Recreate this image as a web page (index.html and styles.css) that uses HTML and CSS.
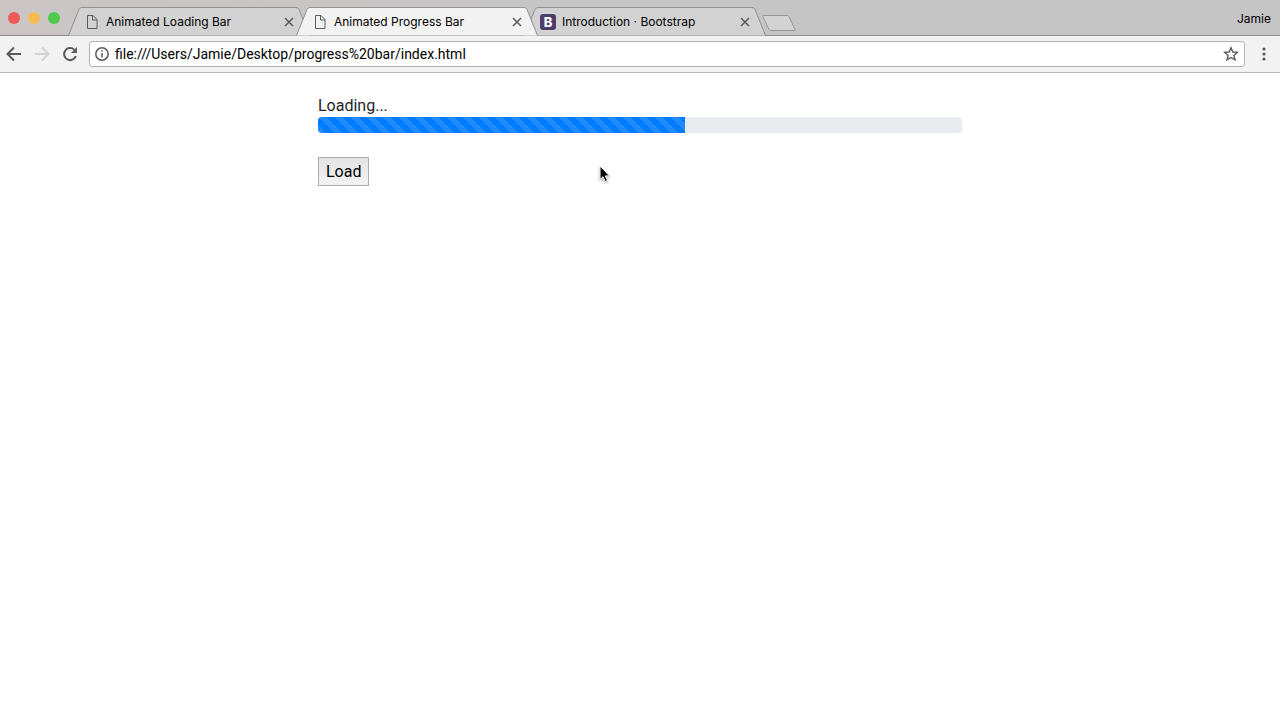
FILE: index.html
```html
<!DOCTYPE html>
<html lang="en">
<head>
  <meta charset="UTF-8" />
  <meta name="viewport" content="width=device-width, initial-scale=1.0"/>
  <title>Animated Progress Bar</title>
  <link rel="stylesheet" href="styles.css">
</head>
<body>
  <!-- Tab strip -->
  <header class="tab-strip">
    <div class="window-buttons">
      <button class="dot red" aria-label="Close window"></button>
      <button class="dot yellow" aria-label="Minimise window"></button>
      <button class="dot green" aria-label="Zoom window"></button>
    </div>

    <div class="tabs">
      <div class="tab">
        <svg class="tab-shape" viewBox="0 0 242 30" preserveAspectRatio="none"><path d="M0.5 29.5 L11 2.5 Q12 0.5 14 0.5 H228 Q230 0.5 231 2.5 L241.5 29.5"/></svg>
        <svg class="tab-icon" viewBox="0 0 16 16"><path d="M3.5 1.5H9L13 5.5V14.5H3.5Z M8.5 1.5V6H13"/></svg>
        <span class="tab-title">Animated Loading Bar</span>
        <button class="tab-close" aria-label="Close tab"><svg viewBox="0 0 10 10"><path d="M1 1L9 9M9 1L1 9"/></svg></button>
      </div>
      <div class="tab active">
        <svg class="tab-shape" viewBox="0 0 242 30" preserveAspectRatio="none"><path d="M0.5 29.5 L11 2.5 Q12 0.5 14 0.5 H228 Q230 0.5 231 2.5 L241.5 29.5"/></svg>
        <svg class="tab-icon" viewBox="0 0 16 16"><path d="M3.5 1.5H9L13 5.5V14.5H3.5Z M8.5 1.5V6H13"/></svg>
        <span class="tab-title">Animated Progress Bar</span>
        <button class="tab-close" aria-label="Close tab"><svg viewBox="0 0 10 10"><path d="M1 1L9 9M9 1L1 9"/></svg></button>
      </div>
      <div class="tab">
        <svg class="tab-shape" viewBox="0 0 242 30" preserveAspectRatio="none"><path d="M0.5 29.5 L11 2.5 Q12 0.5 14 0.5 H228 Q230 0.5 231 2.5 L241.5 29.5"/></svg>
        <span class="tab-icon bootstrap">B</span>
        <span class="tab-title">Introduction · Bootstrap</span>
        <button class="tab-close" aria-label="Close tab"><svg viewBox="0 0 10 10"><path d="M1 1L9 9M9 1L1 9"/></svg></button>
      </div>
      <button class="new-tab" aria-label="New tab">
        <svg viewBox="0 0 34 16"><path d="M1.500 0.500H25.500Q26.500 0.500 27 1.500L33 14.500Q33.500 15.500 32.500 15.500H9Q7.500 15.500 7 14.500L0.800 1.500Q0.500 0.500 1.500 0.500Z"/></svg>
      </button>
    </div>

    <button class="profile">Jamie</button>
  </header>

  <!-- Toolbar -->
  <div class="toolbar">
    <button class="tool" aria-label="Back"><svg viewBox="0 0 16 16"><path d="M15 8H2M8 1.500L1.500 8L8 14.500"/></svg></button>
    <button class="tool disabled" aria-label="Forward" disabled><svg viewBox="0 0 16 16"><path d="M1 8H14M8 1.500L14.500 8L8 14.500"/></svg></button>
    <button class="tool" aria-label="Reload"><svg viewBox="0 0 16 16"><path d="M13.800 10A6 6 0 1 1 12.300 3.800"/><path class="solid" d="M15 1V7H9Z"/></svg></button>
    <div class="address">
      <svg class="info" viewBox="0 0 14 14"><circle cx="7" cy="7" r="6.200"/><path d="M7 6V10.500M7 3.300V4.800"/></svg>
      <input class="url" type="text" aria-label="Address" value="file:///Users/Jamie/Desktop/progress%20bar/index.html" spellcheck="false">
      <button class="star" aria-label="Bookmark"><svg viewBox="0 0 16 16"><path d="M8 1.800L9.800 6L14.300 6.400L10.900 9.400L12 13.900L8 11.500L4 13.900L5.100 9.400L1.700 6.400L6.200 6Z"/></svg></button>
    </div>
    <button class="menu" aria-label="Menu"><svg viewBox="0 0 4 14"><circle cx="2" cy="2" r="1.600"/><circle cx="2" cy="7" r="1.600"/><circle cx="2" cy="12" r="1.600"/></svg></button>
  </div>

  <!-- Page -->
  <main class="container">
    <div class="status" id="status">Loading...</div>
    <div class="progress" role="progressbar" aria-labelledby="status" aria-valuenow="57" aria-valuemin="0" aria-valuemax="100">
      <div class="progress-bar" style="width: 57%"></div>
    </div>
    <button class="load">Load</button>
  </main>

  <svg class="cursor" viewBox="0 0 12 18"><path d="M1 1V14.500L4 11.700L6.200 16.500L8.500 15.500L6.300 10.900H10.500Z"/></svg>
</body>
</html>
```
FILE: styles.css
```css
* {
  box-sizing: border-box;
}

body {
  margin: 0;
  background-color: #fff;
  color: #212529;
  font-family: Roboto, sans-serif;
  font-size: 16px;
}

button {
  padding: 0;
  border: none;
  background: none;
  color: inherit;
  font-family: inherit;
}

svg {
  display: block;
  fill: none;
  stroke: #5a5a5a;
}

/* Tab strip */
.tab-strip {
  display: flex;
  align-items: flex-end;
  height: 36px;
  background: linear-gradient(90deg, #cbc6c5, #c5c5c5 50%);
  border-bottom: 1px solid #8f8d8d;
  font-family: Inter, sans-serif;
}

.window-buttons {
  display: flex;
  align-self: center;
  gap: 8px;
  padding-left: 8px;
  width: 68px;
}

.dot {
  width: 12px;
  height: 12px;
  border-radius: 50%;
}

.red {
  background-color: #ee5a56;
}

.yellow {
  background-color: #f5bd4f;
}

.green {
  background-color: #4fca4b;
}

.tabs {
  display: flex;
  flex: 1;
  align-items: center;
  margin-bottom: -1px;
}

.tab {
  position: relative;
  display: flex;
  align-items: center;
  width: 242px;
  height: 29px;
  margin-right: -14px;
  padding: 0 16px;
  color: #000;
  font-size: 12px;
}

.tab-shape {
  position: absolute;
  top: 0;
  left: 0;
  width: 100%;
  height: 100%;
  fill: #d3d2d2;
  stroke: #8f8d8d;
}

.active {
  z-index: 1;
}

.active .tab-shape {
  fill: #f3f2f2;
}

.tab-icon,
.tab-title,
.tab-close {
  position: relative;
}

.tab-icon {
  width: 16px;
  height: 16px;
  margin-right: 6px;
}

.bootstrap {
  border-radius: 3px;
  background-color: #4c3d6b;
  color: #fff;
  font-size: 13px;
  font-weight: 800;
  line-height: 16px;
  text-align: center;
}

.tab-title {
  flex: 1;
  white-space: nowrap;
}

.tab-close svg {
  width: 10px;
  height: 10px;
  stroke-width: 1.5;
}

.new-tab {
  margin-left: 10px;
  padding-top: 2px;
}

.new-tab svg {
  width: 34px;
  height: 16px;
  fill: #d3d3d3;
  stroke: #979797;
}

.profile {
  align-self: center;
  padding: 2px 9px 0 0;
  color: #000;
  font-size: 12px;
}

/* Toolbar */
.toolbar {
  display: flex;
  align-items: center;
  height: 37px;
  padding: 0 14px 0 6px;
  background-color: #f3f2f2;
  border-bottom: 1px solid #b8b8b8;
}

.tool {
  margin-right: 12px;
}

.tool svg {
  width: 16px;
  height: 16px;
  stroke-width: 2;
}

.disabled svg {
  stroke: #d2d2d2;
}

.solid {
  fill: #5a5a5a;
  stroke: none;
}

.address {
  display: flex;
  flex: 1;
  align-items: center;
  height: 26px;
  margin-right: 17px;
  padding: 0 5px;
  background-color: #fff;
  border: 1px solid #b3b3b3;
  border-radius: 3px;
}

.tool + .address {
  margin-left: -1px;
}

.info {
  width: 14px;
  height: 14px;
  stroke-width: 1.5;
}

.url {
  flex: 1;
  min-width: 0;
  margin-left: 6px;
  padding: 0;
  border: none;
  outline: none;
  background: none;
  color: #000;
  font-family: inherit;
  font-size: 14px;
}

.star svg {
  width: 16px;
  height: 16px;
  stroke-width: 1.4;
}

.menu svg {
  width: 4px;
  height: 14px;
  fill: #5a5a5a;
  stroke: none;
}

/* Page */
.container {
  max-width: 644px;
  margin: 0 auto;
  padding-top: 22px;
}

.status {
  line-height: 22px;
}

.progress {
  height: 16px;
  overflow: hidden;
  background-color: #e9ecef;
  border-radius: 4px;
}

.progress-bar {
  height: 100%;
  background-color: #007bff;
  background-image: linear-gradient(45deg, rgba(255,255,255,0.12) 25%, transparent 25%, transparent 50%, rgba(255,255,255,0.12) 50%, rgba(255,255,255,0.12) 75%, transparent 75%, transparent);
  background-size: 16px 16px;
}

.load {
  margin-top: 24px;
  padding: 1px 7px;
  height: 29px;
  background: linear-gradient(#e4e4e4, #f3f3f3);
  border: 1px solid #adadad;
  color: #000;
  font-size: 16px;
}

.cursor {
  position: absolute;
  top: 165px;
  left: 599px;
  width: 12px;
  height: 18px;
  fill: #000;
  stroke: #fff;
  filter: drop-shadow(0 1px 1px rgba(0,0,0,0.4));
}
```
